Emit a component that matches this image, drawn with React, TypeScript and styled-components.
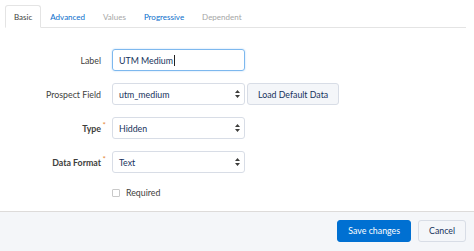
import styled, { createGlobalStyle } from "styled-components";

const Global = createGlobalStyle`
  html, body {
    margin: 0;
    padding: 0;
    background: #ffffff;
  }
  body {
    font-family: Lato, "Open Sans", sans-serif;
    font-size: 8.8px;
    color: #3e3e3c;
  }
`;

const Page = styled.div`
  width: 474px;
  height: 251px;
  display: flex;
  flex-direction: column;
`;

const Tabs = styled.div`
  display: flex;
  margin: 5px 8px 0 5px;
  height: 22px;
  border-bottom: 1px solid #e4e4e4;
`;

const Tab = styled.div<{ $active?: boolean; $tone: "dark" | "blue" | "grey" }>`
  display: flex;
  align-items: center;
  padding: 0 8px;
  box-sizing: border-box;
  font-size: 8px;
  color: ${(p) =>
    p.$tone === "dark" ? "#3e3e3c" : p.$tone === "blue" ? "#0a6ecb" : "#a6a6a6"};
  border: 1px solid ${(p) => (p.$active ? "#e4e4e4" : "transparent")};
  border-bottom: ${(p) => (p.$active ? "1px solid #ffffff" : "none")};
  border-radius: 3px 3px 0 0;
  background: #fff;
  margin-bottom: ${(p) => (p.$active ? "-1px" : "0")};
  height: ${(p) => (p.$active ? "23px" : "22px")};
`;

const Form = styled.div`
  flex: 1;
  display: grid;
  grid-template-columns: 101px 1fr;
  column-gap: 11px;
  row-gap: 12px;
  align-items: center;
  padding-top: 21px;
  align-content: start;
`;

const Label = styled.div<{ $bold?: boolean }>`
  text-align: right;
  font-weight: ${(p) => (p.$bold ? 700 : 400)};
  color: #3e3e3c;
  position: relative;
`;

const Star = styled.span`
  color: #e6883b;
  position: absolute;
  right: -5px;
  top: -3px;
  font-size: 8px;
  font-weight: 400;
`;

const Control = styled.div`
  display: flex;
  align-items: center;
  gap: 2px;
`;

const TextInput = styled.div`
  width: 133px;
  height: 22px;
  box-sizing: border-box;
  border: 1px solid #7db8ee;
  border-radius: 3px;
  box-shadow: 0 0 2px #b5d6f5;
  display: flex;
  align-items: center;
  padding-left: 6px;
  color: #16325c;
`;

const Caret = styled.span`
  display: inline-block;
  width: 1px;
  height: 11px;
  background: #222;
  margin-left: 1px;
`;

const Select = styled.div`
  width: 133px;
  height: 22px;
  box-sizing: border-box;
  border: 1px solid #d8dde6;
  border-radius: 3px;
  display: flex;
  align-items: center;
  justify-content: space-between;
  padding: 0 4px 0 6px;
  color: #16325c;
  background: #fff;
`;

const Button = styled.div<{ $brand?: boolean }>`
  height: 22px;
  box-sizing: border-box;
  padding: 0 10px;
  display: flex;
  align-items: center;
  border-radius: 3px;
  border: 1px solid ${(p) => (p.$brand ? "#0070d2" : "#d8dde6")};
  background: ${(p) => (p.$brand ? "#0070d2" : "#f4f6f9")};
  color: ${(p) => (p.$brand ? "#ffffff" : "#16325c")};
`;

const CheckRow = styled.div`
  grid-column: 2;
  display: flex;
  align-items: center;
  gap: 6px;
  margin-top: 2px;
`;

const Box = styled.span`
  width: 6px;
  height: 6px;
  border: 1px solid #c9c9c9;
  border-radius: 1px;
`;

const Footer = styled.div`
  height: 37px;
  flex-shrink: 0;
  border-top: 1px solid #dddbda;
  background: #f4f6f9;
  display: flex;
  justify-content: flex-end;
  align-items: center;
  gap: 7px;
  padding: 0 8px 2px 0;
`;

const Arrows = () => (
  <svg width="5" height="8" viewBox="0 0 5 8">
    <path d="M2.5 0 L5 3 H0 Z M2.5 8 L0 5 H5 Z" fill="#3e3e3c" />
  </svg>
);

export default function App() {
  return (
    <Page>
      <Global />
      <Tabs>
        <Tab $active $tone="dark">Basic</Tab>
        <Tab $tone="blue">Advanced</Tab>
        <Tab $tone="grey">Values</Tab>
        <Tab $tone="blue">Progressive</Tab>
        <Tab $tone="grey">Dependent</Tab>
      </Tabs>
      <Form>
        <Label>Label</Label>
        <Control>
          <TextInput>
            UTM Medium
            <Caret />
          </TextInput>
        </Control>
        <Label>Prospect Field</Label>
        <Control>
          <Select>
            utm_medium
            <Arrows />
          </Select>
          <Button>Load Default Data</Button>
        </Control>
        <Label $bold>
          Type<Star>*</Star>
        </Label>
        <Control>
          <Select>
            Hidden
            <Arrows />
          </Select>
        </Control>
        <Label $bold>
          Data Format<Star>*</Star>
        </Label>
        <Control>
          <Select>
            Text
            <Arrows />
          </Select>
        </Control>
        <CheckRow>
          <Box />
          Required
        </CheckRow>
      </Form>
      <Footer>
        <Button $brand>Save changes</Button>
        <Button>Cancel</Button>
      </Footer>
    </Page>
  );
}
